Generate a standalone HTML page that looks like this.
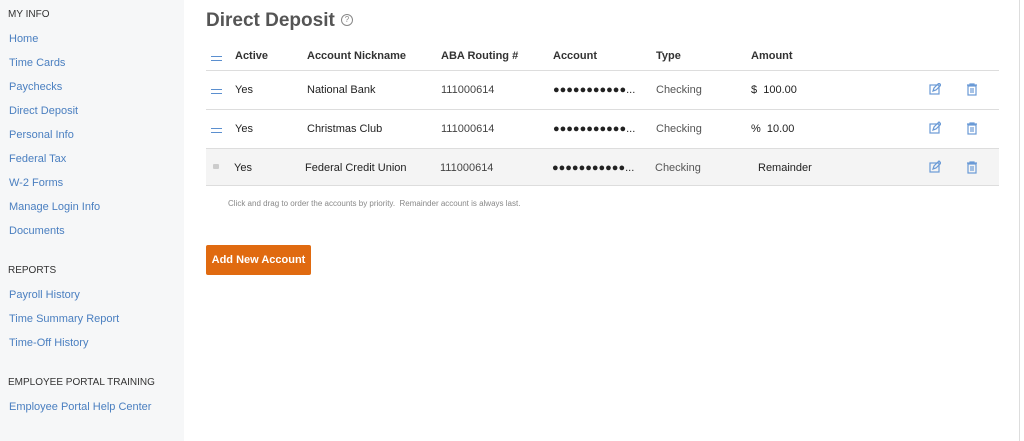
<!DOCTYPE html><html><head><style>
body{margin:0;width:1024px;height:441px;font-family:"Liberation Sans",sans-serif;background:#fff;position:relative;overflow:hidden;color:#222}
.sb{position:absolute;left:0;top:0;width:184px;height:441px;background:#f6f7f8}
.t{position:absolute;white-space:nowrap;line-height:1}
.h{font-size:10px;color:#333;left:8px}
.l{font-size:11px;color:#4a7fc0;left:9px}
.c{font-size:11px;color:#222}
.hd{font-weight:bold;font-size:11px;color:#333}
.ln{position:absolute;left:206px;width:793px;height:1px;background:#ddd}
.dr{position:absolute;left:211px;width:11px;height:5px;border-top:1.5px solid #5b8fcf;border-bottom:1.5px solid #5b8fcf;box-sizing:border-box}
</style></head><body>
<div class="sb"></div>
<div class="t h" style="top:10px">MY INFO</div>
<div class="t l" style="top:34px">Home</div>
<div class="t l" style="top:58px">Time Cards</div>
<div class="t l" style="top:82px">Paychecks</div>
<div class="t l" style="top:106px">Direct Deposit</div>
<div class="t l" style="top:130px">Personal Info</div>
<div class="t l" style="top:154px">Federal Tax</div>
<div class="t l" style="top:178px">W-2 Forms</div>
<div class="t l" style="top:202px">Manage Login Info</div>
<div class="t l" style="top:226px">Documents</div>
<div class="t h" style="top:266px">REPORTS</div>
<div class="t l" style="top:290px">Payroll History</div>
<div class="t l" style="top:314px">Time Summary Report</div>
<div class="t l" style="top:338px">Time-Off History</div>
<div class="t h" style="top:378px">EMPLOYEE PORTAL TRAINING</div>
<div class="t l" style="top:402px">Employee Portal Help Center</div>
<div class="t" style="left:206px;top:11px;font-size:19px;font-weight:bold;color:#555">Direct Deposit</div>
<div class="t" style="left:341px;top:14px;width:10px;height:10px;border:1px solid #888;border-radius:50%;font-size:8px;text-align:center;line-height:10px;color:#888">?</div>
<div style="position:absolute;left:1019px;top:0;width:1px;height:441px;background:#ddd"></div>
<div class="dr" style="top:56px"></div>
<div class="t hd" style="left:235px;top:51px">Active</div>
<div class="t hd" style="left:307px;top:51px">Account Nickname</div>
<div class="t hd" style="left:441px;top:51px">ABA Routing #</div>
<div class="t hd" style="left:553px;top:51px">Account</div>
<div class="t hd" style="left:656px;top:51px">Type</div>
<div class="t hd" style="left:751px;top:51px">Amount</div>
<div class="ln" style="top:70px"></div>
<div class="ln" style="top:109px"></div>
<div class="ln" style="top:148px"></div>
<div style="position:absolute;left:206px;top:149px;width:793px;height:36px;background:#f4f4f4"></div>
<div class="ln" style="top:185px"></div>
<div class="dr" style="top:89px"></div>
<div class="dr" style="top:128px"></div>
<div style="position:absolute;left:213px;top:164px;width:6px;height:5px;background:#ccc;border-radius:1px"></div>
<div class="t c" style="left:235px;top:85px">Yes</div><div class="t c" style="left:307px;top:85px">National Bank</div><div class="t c" style="left:441px;top:85px;color:#444">111000614</div><div class="t c" style="left:553px;top:85px">●●●●●●●●●●●...</div><div class="t c" style="left:656px;top:85px;color:#555">Checking</div><div class="t c" style="left:751px;top:85px">$&nbsp;&nbsp;100.00</div>
<div class="t c" style="left:235px;top:124px">Yes</div><div class="t c" style="left:307px;top:124px">Christmas Club</div><div class="t c" style="left:441px;top:124px;color:#444">111000614</div><div class="t c" style="left:553px;top:124px">●●●●●●●●●●●...</div><div class="t c" style="left:656px;top:124px;color:#555">Checking</div><div class="t c" style="left:751px;top:124px">%&nbsp;&nbsp;10.00</div>
<div class="t c" style="left:234px;top:163px">Yes</div><div class="t c" style="left:305px;top:163px">Federal Credit Union</div><div class="t c" style="left:440px;top:163px;color:#444">111000614</div><div class="t c" style="left:552px;top:163px">●●●●●●●●●●●...</div><div class="t c" style="left:655px;top:163px;color:#555">Checking</div><div class="t c" style="left:758px;top:163px">Remainder</div>
<svg style="position:absolute;left:929px;top:83px" width="12" height="100" fill="none" stroke="#6a9ad6" stroke-width="1.2">
<g><rect x="1" y="2" width="9" height="9"/><path d="M4 8l1-3 5-5 2 2-5 5z"/></g>
<g transform="translate(0,39)"><rect x="1" y="2" width="9" height="9"/><path d="M4 8l1-3 5-5 2 2-5 5z"/></g>
<g transform="translate(0,78)"><rect x="1" y="2" width="9" height="9"/><path d="M4 8l1-3 5-5 2 2-5 5z"/></g></svg>
<svg style="position:absolute;left:966px;top:83px" width="12" height="100" fill="none" stroke="#6a9ad6" stroke-width="1.2">
<g><path d="M1 2h10M4 2V1h4v1"/><rect x="2" y="3" width="8" height="9"/><path d="M5 5v5M7 5v5"/></g>
<g transform="translate(0,39)"><path d="M1 2h10M4 2V1h4v1"/><rect x="2" y="3" width="8" height="9"/><path d="M5 5v5M7 5v5"/></g>
<g transform="translate(0,78)"><path d="M1 2h10M4 2V1h4v1"/><rect x="2" y="3" width="8" height="9"/><path d="M5 5v5M7 5v5"/></g></svg>
<div class="t" style="left:228px;top:200px;font-size:8px;color:#888">Click and drag to order the accounts by priority.&nbsp; Remainder account is always last.</div>
<div style="position:absolute;left:206px;top:245px;width:105px;height:30px;background:#e06a10;border-radius:2px;color:#fff;font-weight:bold;font-size:11px;line-height:30px;text-align:center">Add New Account</div>
</body></html>
